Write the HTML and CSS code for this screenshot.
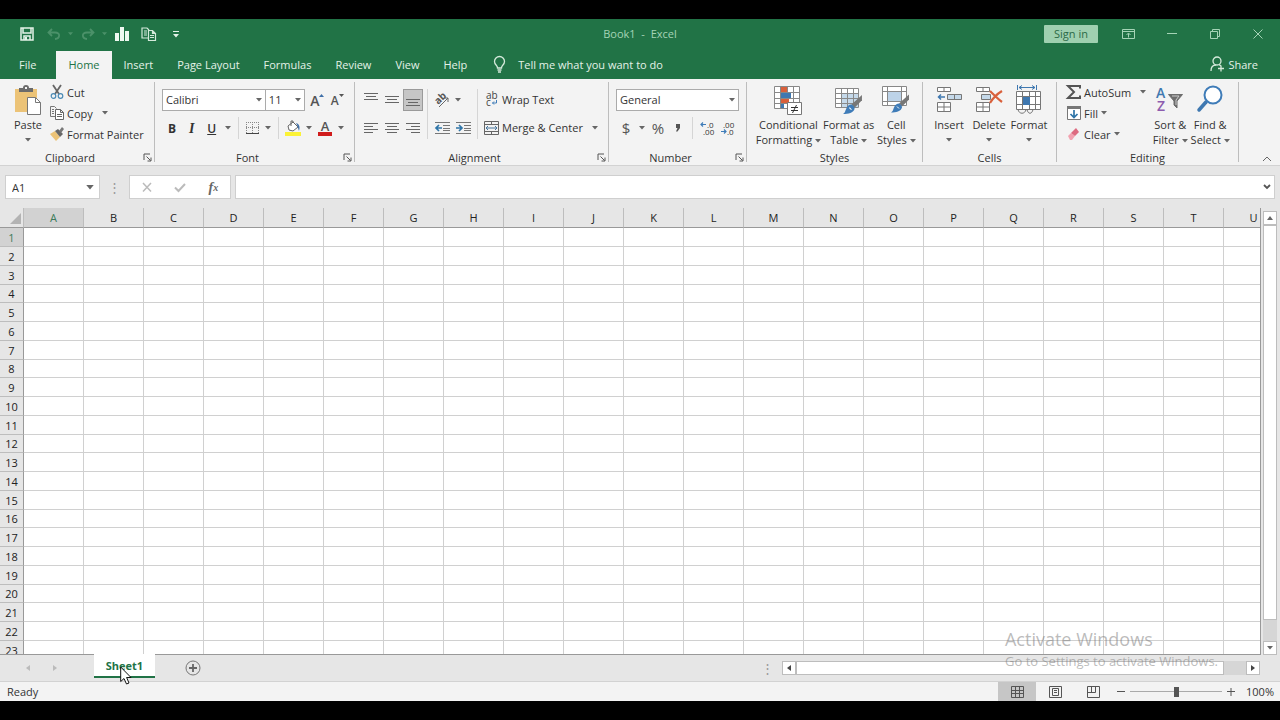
FILE: index.html
```
<!DOCTYPE html>
<html lang="en">
<head>
  <meta charset="UTF-8" />
  <meta name="viewport" content="width=device-width, initial-scale=1" />
  <title>Book1 - Excel</title>
  <link rel="stylesheet" href="styles.css">
</head>
<body>
  <svg class="defs" xmlns="http://www.w3.org/2000/svg">
    <symbol id="caret" viewBox="0 0 6 4"><path d="M0 0h6L3 3.5z" fill="currentColor"/></symbol>
    <symbol id="launcher" viewBox="0 0 9 9"><path d="M1 7V1h6M3.5 3.5l4 4M8 4.5V8H4.5" fill="none" stroke="#555"/></symbol>
    <symbol id="brush" viewBox="0 0 20 20">
      <path d="M19 1v5l-7 7-3-3z" fill="#777"/>
      <path d="M9 10c2 1 3 2 3 4-1 4-6 5-11 5 2-1 2-3 3-5 1-3 3-4 5-4z" fill="#3f7cb8"/>
      <path d="M7 13l2 2" stroke="#fff"/>
    </symbol>
  </svg>

  <header class="top">
    <div class="titlebar">
      <div class="quick">
        <button class="quick-btn" aria-label="Save"><svg width="14" height="14" viewBox="0 0 14 14"><path d="M1 1h12v12H1zM3 1v5h8V1M4 13V9h6v4" fill="none" stroke="#e4f2e8" stroke-width="1.5"/><path d="M5 10h2v3H5z" fill="#e4f2e8"/></svg></button>
        <button class="quick-btn dim" aria-label="Undo"><svg width="14" height="12" viewBox="0 0 14 12"><path d="M5 1L1.5 4.5 5 8M2 4.5h6c6 0 5 6 0 6.5" fill="none" stroke="currentColor" stroke-width="1.8"/></svg></button>
        <button class="quick-caret dim" aria-label="Undo list"><svg width="5" height="4"><use href="#caret"/></svg></button>
        <button class="quick-btn dim" aria-label="Redo"><svg width="14" height="12" viewBox="0 0 14 12"><path d="M9 1l3.5 3.5L9 8M12 4.5H6c-6 0-5 6 0 6.5" fill="none" stroke="currentColor" stroke-width="1.8"/></svg></button>
        <button class="quick-caret dim" aria-label="Redo list"><svg width="5" height="4"><use href="#caret"/></svg></button>
        <button class="quick-btn" aria-label="Chart"><svg width="14" height="14" viewBox="0 0 14 14"><path d="M0 6h4v8H0zM5 0h4v14H5zM10 4h4v10h-4z" fill="#eef8f0"/></svg></button>
        <button class="quick-btn" aria-label="Copy"><svg width="16" height="14" viewBox="0 0 16 14"><path d="M7 11H1V1h5l2 2M3 4h3M3 6h3M3 8h3" fill="none" stroke="#d5eadb" stroke-width="1.2"/><path d="M7.5 3.500h4l3 3v7h-7zM11.5 3.500v3h3M9 8.500h4M9 10.500h4" fill="none" stroke="#d5eadb" stroke-width="1.2"/></svg></button>
        <button class="quick-btn" aria-label="Customize"><svg width="6" height="7" viewBox="0 0 6 7"><path d="M0 0h6v1H0zM0 3h6L3 6.5z" fill="#e4f2e8"/></svg></button>
      </div>
      <h1 class="title">Book1&nbsp; -&nbsp; Excel</h1>
      <div class="window">
        <button class="sign-in">Sign in</button>
        <button class="window-btn" aria-label="Ribbon display"><svg width="13" height="10" viewBox="0 0 13 10"><path d="M.5 .5h12v9H.5zM.5 2.500h12M6.5 8.500v-4M4.5 6l2-2 2 2" fill="none" stroke="#a5d4b6"/></svg></button>
        <button class="window-btn" aria-label="Minimize"><svg width="10" height="2"><path d="M0 .5h10" stroke="#a5d4b6"/></svg></button>
        <button class="window-btn" aria-label="Restore"><svg width="10" height="10" viewBox="0 0 10 10"><path d="M.5 2.500h7v7h-7zM2.5 2.500v-2h7v7h-2" fill="none" stroke="#a5d4b6"/></svg></button>
        <button class="window-btn" aria-label="Close"><svg width="10" height="10" viewBox="0 0 10 10"><path d="M.5 .5l9 9M9.5 .5l-9 9" stroke="#a5d4b6"/></svg></button>
      </div>
    </div>
    <nav class="tabs">
      <button class="tab file">File</button>
      <button class="tab active">Home</button>
      <button class="tab">Insert</button>
      <button class="tab">Page Layout</button>
      <button class="tab">Formulas</button>
      <button class="tab">Review</button>
      <button class="tab">View</button>
      <button class="tab">Help</button>
      <button class="tab tell">
        <svg width="13" height="17" viewBox="0 0 13 17"><path d="M4.500 12c0-3-3-3-3-6.500a5 5 0 0110 0c0 3.500-3 3.500-3 6.500zM4.500 14h4M5 16h3" fill="none" stroke="#d5eadb" stroke-width="1.3"/></svg>
        Tell me what you want to do
      </button>
      <button class="tab share">
        <svg width="15" height="16" viewBox="0 0 15 16"><circle cx="7" cy="5" r="4" fill="none" stroke="#d5eadb" stroke-width="1.3"/><path d="M1 15c0-4 2-6 5-6M9 8.500l2 1.500M8 12.500h6M11 9.500v6" fill="none" stroke="#d5eadb" stroke-width="1.3"/></svg>
        Share
      </button>
    </nav>
  </header>

  <section class="ribbon">
    <div class="group clipboard">
      <div class="group-body">
        <button class="big">
          <svg width="28" height="30" viewBox="0 0 28 30"><path d="M1 4h22v23H1z" fill="#ecc377"/><path d="M5 3h4a3 3 0 016 0h4v4H5z" fill="#6b6b6b"/><path d="M11 2h2v2h-2z" fill="#f3f3f3"/><path d="M13.500 12.500h8l5 5v12h-13z" fill="#fff" stroke="#777"/><path d="M21.500 12.500v5h5" fill="none" stroke="#777"/></svg>
          <span>Paste</span>
          <svg class="caret" width="6" height="4"><use href="#caret"/></svg>
        </button>
        <div class="list">
          <button class="small">
            <svg width="14" height="14" viewBox="0 0 14 14"><path d="M3 0l6 9M11 0L5 9" stroke="#666" stroke-width="1.8"/><circle cx="3.500" cy="11" r="2.300" fill="none" stroke="#4a8ab5" stroke-width="1.2"/><circle cx="10.500" cy="11" r="2.300" fill="none" stroke="#4a8ab5" stroke-width="1.2"/></svg>
            Cut
          </button>
          <button class="small">
            <svg width="14" height="14" viewBox="0 0 14 14"><path d="M5 10.500H.5v-10h4l2 2M2 3.500h2M2 5.500h2M2 7.500h2" fill="none" stroke="#777"/><path d="M5.500 3.500h5l3 3v7h-8zM10.500 3.500v3h3M7 8.500h5M7 10.500h5" fill="#fff" stroke="#666"/></svg>
            Copy
            <svg class="caret far" width="6" height="4"><use href="#caret"/></svg>
          </button>
          <button class="small">
            <svg width="14" height="14" viewBox="0 0 14 14"><path d="M0 7l5-3 5 6-4 4z" fill="#ecc377"/><path d="M5 4l3-2 5 5-3 3z" fill="#666"/><path d="M9 4l3-4 2 2-3 4z" fill="#777"/></svg>
            Format Painter
          </button>
        </div>
      </div>
      <div class="group-title"><span>Clipboard</span><button class="launcher" aria-label="Clipboard options"><svg width="9" height="9"><use href="#launcher"/></svg></button></div>
    </div>

    <div class="group font">
      <div class="group-body rows">
        <div class="row">
          <select class="combo font-name" aria-label="Font"><option>Calibri</option></select>
          <select class="combo font-size" aria-label="Font size"><option>11</option></select>
          <button class="icon-btn" aria-label="Increase font size"><span class="letter">A</span><svg width="5" height="13" viewBox="0 0 5 13"><path d="M0 3h5L2.500 0z" fill="#3f6fa8"/></svg></button>
          <button class="icon-btn" aria-label="Decrease font size"><span class="letter less">A</span><svg width="5" height="13" viewBox="0 0 5 13"><path d="M0 0h5L2.500 3z" fill="#555"/></svg></button>
        </div>
        <div class="row">
          <button class="icon-btn bold">B</button>
          <button class="icon-btn italic">I</button>
          <button class="icon-btn underline">U</button>
          <button class="caret-btn" aria-label="Underline style"><svg class="caret" width="6" height="4"><use href="#caret"/></svg></button>
          <span class="divider"></span>
          <button class="icon-btn" aria-label="Borders"><svg width="13" height="12" viewBox="0 0 13 12"><path d="M.5 0v11M6.500 0v11M12.500 0v11M0 .5h13M0 5.500h13" stroke="#888" stroke-dasharray="1 1"/><path d="M0 11.500h13" stroke="#444"/></svg></button>
          <button class="caret-btn" aria-label="Border list"><svg class="caret" width="6" height="4"><use href="#caret"/></svg></button>
          <span class="divider"></span>
          <button class="icon-btn" aria-label="Fill color"><svg width="16" height="16" viewBox="0 0 16 16"><path d="M0 12h16v4H0z" fill="#fbf236"/><path d="M3 6l5-4 5 5-5 4-4-1z" fill="#fff" stroke="#666"/><path d="M6 6V1h2v2" fill="none" stroke="#666"/><path d="M11 3c4 1 4 5 3 8-1-2-1-5-3-8z" fill="#3f6fa8"/></svg></button>
          <button class="caret-btn" aria-label="Fill color list"><svg class="caret" width="6" height="4"><use href="#caret"/></svg></button>
          <button class="icon-btn" aria-label="Font color"><span class="font-color">A</span></button>
          <button class="caret-btn" aria-label="Font color list"><svg class="caret" width="6" height="4"><use href="#caret"/></svg></button>
        </div>
      </div>
      <div class="group-title"><span>Font</span><button class="launcher" aria-label="Font options"><svg width="9" height="9"><use href="#launcher"/></svg></button></div>
    </div>

    <div class="group alignment">
      <div class="group-body">
        <div class="rows">
          <div class="row spaced">
            <button class="icon-btn" aria-label="Top align"><svg width="14" height="14" viewBox="0 0 14 14"><path d="M0 .5h14M2 3.500h10M0 6.500h14" stroke="#666"/></svg></button>
            <button class="icon-btn" aria-label="Middle align"><svg width="14" height="14" viewBox="0 0 14 14"><path d="M0 3.500h14M2 6.500h10M0 9.500h14" stroke="#666"/></svg></button>
            <button class="icon-btn pressed" aria-label="Bottom align"><svg width="14" height="14" viewBox="0 0 14 14"><path d="M0 6.500h14M2 9.500h10M0 12.500h14" stroke="#666"/></svg></button>
          </div>
          <div class="row spaced">
            <button class="icon-btn" aria-label="Align left"><svg width="14" height="11" viewBox="0 0 14 11"><path d="M0 .5h14M0 3.500h9M0 6.500h14M0 9.500h9" stroke="#666"/></svg></button>
            <button class="icon-btn" aria-label="Center"><svg width="14" height="11" viewBox="0 0 14 11"><path d="M0 .5h14M2 3.500h10M0 6.500h14M2 9.500h10" stroke="#666"/></svg></button>
            <button class="icon-btn" aria-label="Align right"><svg width="14" height="11" viewBox="0 0 14 11"><path d="M0 .5h14M5 3.500h9M0 6.500h14M5 9.500h9" stroke="#666"/></svg></button>
          </div>
        </div>
        <span class="divider tall"></span>
        <div class="rows">
          <div class="row">
            <button class="icon-btn" aria-label="Orientation"><svg width="18" height="16" viewBox="0 0 18 16"><text x="2" y="11" font-size="10" font-weight="700" fill="#555" transform="rotate(-45 6 8)">ab</text><path d="M6 15L15 6M11 6h4v4" fill="none" stroke="#666"/></svg></button>
            <button class="caret-btn" aria-label="Orientation list"><svg class="caret" width="6" height="4"><use href="#caret"/></svg></button>
          </div>
          <div class="row spaced">
            <button class="icon-btn" aria-label="Decrease indent"><svg width="15" height="12" viewBox="0 0 15 12"><path d="M0 .5h15M8 3.500h7M8 6.500h7M8 8.500h7M0 11.500h15" stroke="#777"/><path d="M7 6H2M4 3L1 6l3 3" fill="none" stroke="#2f75a8" stroke-width="1.7"/></svg></button>
            <button class="icon-btn" aria-label="Increase indent"><svg width="15" height="12" viewBox="0 0 15 12"><path d="M0 .5h15M8 3.500h7M8 6.500h7M8 8.500h7M0 11.500h15" stroke="#777"/><path d="M0 6h5M3 3l3 3-3 3" fill="none" stroke="#2f75a8" stroke-width="1.7"/></svg></button>
          </div>
        </div>
        <span class="divider tall"></span>
        <div class="rows wide">
          <button class="small">
            <svg width="15" height="15" viewBox="0 0 15 15"><text y="7" font-size="10" fill="#444"><tspan x="2">ab</tspan><tspan x="2" dy="7">c</tspan></text><path d="M12.500 8v3H8.500M10 9.500L8.500 11 10 12.500" fill="none" stroke="#3f7cb8"/></svg>
            Wrap Text
          </button>
          <button class="small">
            <svg width="15" height="14" viewBox="0 0 15 14"><path d="M.5 .5h14v13H.5zM.5 3.500h14M.5 10.500h14M7.500 .5v3M7.500 10.500v3" fill="none" stroke="#666"/><path d="M2 7h11M4 5L2 7l2 2M11 5l2 2-2 2" fill="none" stroke="#47759c"/></svg>
            Merge &amp; Center
            <svg class="caret far" width="6" height="4"><use href="#caret"/></svg>
          </button>
        </div>
      </div>
      <div class="group-title"><span>Alignment</span><button class="launcher" aria-label="Alignment options"><svg width="9" height="9"><use href="#launcher"/></svg></button></div>
    </div>

    <div class="group number">
      <div class="group-body rows">
        <div class="row">
          <select class="combo format" aria-label="Number format"><option>General</option></select>
        </div>
        <div class="row">
          <button class="icon-btn sign">$</button>
          <button class="caret-btn" aria-label="Currency list"><svg class="caret" width="6" height="4"><use href="#caret"/></svg></button>
          <button class="icon-btn sign">%</button>
          <button class="icon-btn" aria-label="Comma style"><svg width="4" height="8" viewBox="0 0 4 8"><path d="M0 0h4v4L1.500 7.500H0L1.500 4H0z" fill="#555"/></svg></button>
          <span class="divider"></span>
          <button class="icon-btn" aria-label="Increase decimal"><svg width="15" height="14" viewBox="0 0 15 14"><text y="7" font-size="8" fill="#333"><tspan x="7">.0</tspan><tspan x="3" dy="7">.00</tspan></text><path d="M6 3.500H1M3 1.500l-2 2 2 2" fill="none" stroke="#3f7cb8" stroke-width="1.2"/></svg></button>
          <button class="icon-btn" aria-label="Decrease decimal"><svg width="15" height="14" viewBox="0 0 15 14"><text y="7" font-size="8" fill="#333"><tspan x="3">.00</tspan><tspan x="7" dy="7">.0</tspan></text><path d="M1 10.500h5M4 8.500l2 2-2 2" fill="none" stroke="#3f7cb8" stroke-width="1.2"/></svg></button>
        </div>
      </div>
      <div class="group-title"><span>Number</span><button class="launcher" aria-label="Number options"><svg width="9" height="9"><use href="#launcher"/></svg></button></div>
    </div>

    <div class="group styles">
      <div class="group-body">
        <button class="big">
          <svg width="28" height="30" viewBox="0 0 28 30"><path d="M.5 1.500h25v22H.5z" fill="#fff"/><path d="M7 2h6v5H7zM7 14h8v4H7z" fill="#d9603b"/><path d="M7 8h10v5H7zM7 19h3v4H7z" fill="#3f78b0"/><path d="M.5 1.500h25v22H.5zM.5 7.500h25M.5 13.500h25M.5 18.500h25M6.500 1.500v22M13.500 1.500v6M19.500 1.500v22" fill="none" stroke="#888"/><path d="M13.500 17.500h14v12h-14z" fill="#fff" stroke="#777"/><path d="M17 22.500h7M17 25.500h7M22.500 20l-4 8" stroke="#333"/></svg>
          <span>Conditional<br>Formatting <svg class="caret" width="6" height="4"><use href="#caret"/></svg></span>
        </button>
        <button class="big">
          <svg width="28" height="30" viewBox="0 0 28 30"><path d="M.5 3.500h23v19H.5z" fill="#fff"/><path d="M6 8h18v14H6z" fill="#c5d9ea"/><path d="M.5 3.500h23v19H.5zM.5 8.500h23M.5 13.500h23M.5 18.500h23M6.500 3.500v19M12.500 3.500v19M18.500 3.500v19" fill="none" stroke="#888"/><use href="#brush" x="7" y="9" width="21" height="21"/></svg>
          <span>Format as<br>Table <svg class="caret" width="6" height="4"><use href="#caret"/></svg></span>
        </button>
        <button class="big">
          <svg width="28" height="30" viewBox="0 0 28 30"><path d="M.5 1.500h24v19H.5z" fill="#fff"/><path d="M5 7h15v10H5z" fill="#bdd3e8"/><path d="M.5 1.500h24v19H.5zM.5 6.500h24M.5 16.500h24M5.500 1.500v19M19.500 1.500v19" fill="none" stroke="#888"/><use href="#brush" x="8" y="8" width="20" height="21"/></svg>
          <span>Cell<br>Styles <svg class="caret" width="6" height="4"><use href="#caret"/></svg></span>
        </button>
      </div>
      <div class="group-title"><span>Styles</span></div>
    </div>

    <div class="group cells">
      <div class="group-body">
        <button class="big">
          <svg width="26" height="30" viewBox="0 0 26 30"><path d="M1.500 2.500h13v4h-13zM8 2.500v4M1.500 17.500h13v9h-13zM8 17.500v9M1.500 22h13" fill="#fff" stroke="#777"/><path d="M11.500 9.500h14v5h-14zM18.500 9.500v5" fill="#c5d9ea" stroke="#777"/><path d="M9 12H3M5 9.500L2.500 12 5 14.500" fill="none" stroke="#3f78b0" stroke-width="1.5"/></svg>
          <span>Insert</span>
          <svg class="caret" width="6" height="4"><use href="#caret"/></svg>
        </button>
        <button class="big">
          <svg width="28" height="30" viewBox="0 0 28 30"><path d="M1.500 2.500h13v4h-13zM8 2.500v4M1.500 17.500h13v9h-13zM8 17.500v9M1.500 22h13" fill="#fff" stroke="#777"/><path d="M6.500 9.500h9v5h-9z" fill="#c5d9ea" stroke="#777"/><path d="M15 6c4 4 8 8 12 11M27 6c-5 3-9 7-12 12" fill="none" stroke="#d9603b" stroke-width="2.2"/></svg>
          <span>Delete</span>
          <svg class="caret" width="6" height="4"><use href="#caret"/></svg>
        </button>
        <button class="big">
          <svg width="28" height="30" viewBox="0 0 28 30"><path d="M1.500 6.500h24v18h-24z" fill="#fff"/><path d="M1.500 6.500h24v18h-24zM1.500 11.500h24M1.500 19.500h24M7.500 6.500v18M14.500 6.500v18M20.500 6.500v18M3 24.500c1 5 7 5 8 0M12 24.500c1 5 5 5 6 0" fill="none" stroke="#777"/><path d="M8 12h7v8H8z" fill="#3f78b0"/><path d="M2.500 0v5M21.500 0v5M4 2.500h16M7 .5l-3 2 3 2M17 .5l3 2-3 2" fill="none" stroke="#3f78b0"/></svg>
          <span>Format</span>
          <svg class="caret" width="6" height="4"><use href="#caret"/></svg>
        </button>
      </div>
      <div class="group-title"><span>Cells</span></div>
    </div>

    <div class="group editing">
      <div class="group-body">
        <div class="list">
          <button class="small">
            <svg width="14" height="14" viewBox="0 0 14 14"><path d="M13 3.500V1H1l6 6-6 6h12v-2.500" fill="none" stroke="#555" stroke-width="2"/></svg>
            AutoSum
            <svg class="caret far" width="6" height="4"><use href="#caret"/></svg>
          </button>
          <button class="small">
            <svg width="14" height="14" viewBox="0 0 14 14"><path d="M.5 .5h13v13H.5z" fill="#fff" stroke="#777"/><path d="M0 1.500h14" stroke="#777" stroke-width="3"/><path d="M7 4v7M3.500 8L7 11.500 10.500 8" fill="none" stroke="#2f75a8" stroke-width="1.7"/></svg>
            Fill
            <svg class="caret" width="6" height="4"><use href="#caret"/></svg>
          </button>
          <button class="small">
            <svg width="14" height="14" viewBox="0 0 14 14"><path d="M1 9l3-3 4 3-3 4H3z" fill="#f2a2b0"/><path d="M4 6l5-5 3 4-4 4z" fill="#dd6b80"/></svg>
            Clear
            <svg class="caret" width="6" height="4"><use href="#caret"/></svg>
          </button>
        </div>
        <button class="big">
          <svg width="28" height="30" viewBox="0 0 28 30"><text y="13" font-size="14" font-weight="600"><tspan x="0" fill="#3f78b0">A</tspan><tspan x="1" dy="13" fill="#8d5cae">Z</tspan></text><path d="M12.500 9.500h14L21 16v7l-3-3v-4z" fill="#6d6d6d" stroke="#6d6d6d"/><path d="M16 11h7l-3 4v5" fill="none" stroke="#ccc"/></svg>
          <span>Sort &amp;<br>Filter <svg class="caret" width="6" height="4"><use href="#caret"/></svg></span>
        </button>
        <button class="big">
          <svg width="28" height="30" viewBox="0 0 28 30"><path d="M10 17l-7 8" stroke="#3f78b0" stroke-width="3.500" stroke-linecap="round"/><circle cx="17" cy="10" r="8.500" fill="#fff" stroke="#3f7cb8" stroke-width="2"/></svg>
          <span>Find &amp;<br>Select <svg class="caret" width="6" height="4"><use href="#caret"/></svg></span>
        </button>
      </div>
      <div class="group-title"><span>Editing</span></div>
    </div>
    <button class="collapse" aria-label="Collapse ribbon"><svg width="10" height="6" viewBox="0 0 10 6"><path d="M1 5l4-4 4 4" fill="none" stroke="#666"/></svg></button>
  </section>

  <div class="formula-bar">
    <div class="field name-box">
      <input type="text" value="A1" aria-label="Name box">
      <button aria-label="Name list"><svg width="8" height="5"><use href="#caret"/></svg></button>
    </div>
    <span class="grip">⋮</span>
    <div class="field functions">
      <button aria-label="Cancel"><svg width="10" height="9" viewBox="0 0 10 9"><path d="M1 0l8 8.500M9 0L1 8.500" stroke="#bbb" stroke-width="1.5"/></svg></button>
      <button aria-label="Enter"><svg width="12" height="9" viewBox="0 0 12 9"><path d="M1 4.500L4.500 8 11 1" fill="none" stroke="#bbb" stroke-width="2"/></svg></button>
      <button class="fx" aria-label="Insert function">f<small>x</small></button>
    </div>
    <div class="field formula">
      <input type="text" aria-label="Formula">
      <button aria-label="Expand formula bar"><svg width="8" height="6" viewBox="0 0 8 6"><path d="M1 1l3 3 3-3" fill="none" stroke="#555" stroke-width="1.8"/></svg></button>
    </div>
  </div>

  <main class="sheet">
    <div class="grid">
      <table>
        <thead><tr id="columns"><th class="corner"><svg width="11" height="11"><path d="M11 0v11H0z" fill="#b3b3b3"/></svg></th></tr></thead>
        <tbody id="cells"></tbody>
      </table>
    </div>
    <div class="scroll vertical">
      <button aria-label="Scroll up"><svg width="6" height="4"><path d="M0 4h6L3 0z" fill="#666"/></svg></button>
      <div class="track"><div class="thumb"></div></div>
      <button aria-label="Scroll down"><svg class="caret" width="6" height="4"><use href="#caret"/></svg></button>
    </div>
  </main>

  <div class="sheet-bar">
    <button class="nav-btn" aria-label="Previous sheet"><svg width="4" height="6"><path d="M4 0v6L0 3z" fill="#bbb"/></svg></button>
    <button class="nav-btn" aria-label="Next sheet"><svg width="4" height="6"><path d="M0 0v6l4-3z" fill="#bbb"/></svg></button>
    <button class="sheet-tab">Sheet1
      <svg class="pointer" width="12" height="19" viewBox="0 0 12 19"><path d="M.7 1v14.500l3.300-3 2.500 5.500 2.500-1-2.400-5.500H11z" fill="#fff" stroke="#111"/></svg>
    </button>
    <button class="add-sheet" aria-label="New sheet"><svg width="16" height="16" viewBox="0 0 16 16"><circle cx="8" cy="8" r="7" fill="none" stroke="#777"/><path d="M8 4v8M4 8h8" stroke="#666" stroke-width="1.8"/></svg></button>
    <span class="grip">⋮</span>
    <div class="scroll horizontal">
      <button aria-label="Scroll left"><svg width="4" height="6"><path d="M4 0v6L0 3z" fill="#444"/></svg></button>
      <div class="track"><div class="thumb"></div></div>
      <button aria-label="Scroll right"><svg width="4" height="6"><path d="M0 0v6l4-3z" fill="#444"/></svg></button>
    </div>
  </div>

  <footer class="status">
    <span class="ready">Ready</span>
    <button class="view active" aria-label="Normal view"><svg width="13" height="12" viewBox="0 0 13 12"><path d="M.5 .5h12v11H.5zM4.500 .5v11M8.500 .5v11M.5 4.500h12M.5 7.500h12" fill="none" stroke="#555"/></svg></button>
    <button class="view" aria-label="Page layout view"><svg width="13" height="12" viewBox="0 0 13 12"><path d="M.5 .5h12v11H.5zM3.500 2.500h6v7h-6zM5 4.500h3M5 6.500h3" fill="none" stroke="#555"/></svg></button>
    <button class="view" aria-label="Page break view"><svg width="13" height="12" viewBox="0 0 13 12"><path d="M.5 .5h12v11H.5zM4.500 .5v6M8.500 .5v6M.5 6.500h8" fill="none" stroke="#555"/></svg></button>
    <button class="zoom-btn" aria-label="Zoom out"><svg width="8" height="8"><path d="M0 3.500h8" stroke="#555"/></svg></button>
    <input class="zoom" type="range" min="0" max="200" value="100" aria-label="Zoom">
    <button class="zoom-btn" aria-label="Zoom in"><svg width="8" height="8"><path d="M0 3.500h8M4 0v8" stroke="#555"/></svg></button>
    <span class="percent">100%</span>
  </footer>

  <aside class="watermark">
    <p class="watermark-title">Activate Windows</p>
    <p>Go to Settings to activate Windows.</p>
  </aside>

  <script>
    const columns = document.getElementById("columns");
    const cells = document.getElementById("cells");
    const letters = "ABCDEFGHIJKLMNOPQRSTU".split("");

    letters.forEach((letter, i) => {
      const th = document.createElement("th");
      th.textContent = letter;
      if (i === 0) th.className = "selected";
      columns.appendChild(th);
    });

    for (let row = 1; row <= 23; row++) {
      const tr = document.createElement("tr");
      tr.innerHTML = `<th${row === 1 ? " class='selected'" : ""}>${row}</th>` + "<td></td>".repeat(letters.length);
      cells.appendChild(tr);
    }
  </script>
</body>
</html>
```
FILE: styles.css
```
* {
  box-sizing: border-box;
}

body {
  margin: 0;
  padding: 19px 0;
  height: 100vh;
  display: flex;
  flex-direction: column;
  overflow: hidden;
  background-color: #000;
  color: #333;
  font-family: "Open Sans", "Noto Sans", sans-serif;
  font-size: 11px;
  line-height: 15px;
}

.defs {
  display: none;
}

button,
input,
select {
  margin: 0;
  padding: 0;
  border: none;
  background: none;
  color: inherit;
  font: inherit;
}

button {
  display: flex;
  align-items: center;
  justify-content: center;
  white-space: nowrap;
}

svg {
  flex: none;
  overflow: visible;
}

.caret {
  color: #666;
}

/* title bar and tabs */
.top {
  background-color: #217346;
  color: #e4f2e8;
}

.titlebar {
  display: grid;
  grid-template-columns: 1fr auto 1fr;
  align-items: center;
  height: 30px;
}

.quick {
  display: flex;
  padding-left: 13px;
}

.quick-btn {
  width: 27px;
  height: 24px;
}

.quick-caret {
  width: 7px;
}

.dim {
  color: #4b9169;
}

.title {
  margin: 0;
  padding-bottom: 2px;
  font-size: 11px;
  font-weight: 400;
  color: #a5d4b6;
}

.window {
  display: flex;
  align-items: center;
  justify-content: flex-end;
  padding: 0 1px 1px 0;
}

.sign-in {
  width: 54px;
  height: 18px;
  margin-right: 9px;
  border-radius: 1px;
  background-color: #9fd0b0;
  color: #2b6a47;
}

.window-btn {
  width: 43px;
  height: 24px;
}

.tabs {
  display: flex;
  height: 30px;
  padding-top: 2px;
}

.tab {
  padding: 0 12px 2px;
}

.file {
  padding: 0 20px 2px 19px;
}

.tab.active {
  background-color: #f3f3f3;
  color: #217346;
}

.tell {
  gap: 12px;
  padding-left: 14px;
}

.share {
  gap: 3px;
  margin-left: auto;
  padding-right: 22px;
}

/* ribbon */
.ribbon {
  display: flex;
  height: 87px;
  padding: 3px 0;
  background-color: #f3f3f3;
  border-bottom: 1px solid #d2d2d2;
}

.group {
  display: flex;
  flex-direction: column;
  flex: none;
  border-right: 1px solid #bdbdbd;
}

.clipboard { width: 155px; }
.font { width: 200px; }
.alignment { width: 254px; }
.number { width: 138px; }
.styles { width: 176px; }
.cells { width: 134px; }
.editing { width: 182px; }

.group-body {
  display: flex;
  flex: 1;
  padding: 0 6px;
}

.group-title {
  display: flex;
  height: 12px;
  text-align: center;
}

.group-title span {
  flex: 1;
}

.launcher {
  width: 14px;
  height: 15px;
}

.rows {
  display: flex;
  flex-direction: column;
  gap: 6px;
  padding-top: 7px;
}

.wide {
  padding-left: 2px;
}

.font .group-body,
.number .group-body {
  padding: 7px 7px 0;
}

.row {
  display: flex;
  height: 22px;
}

.spaced {
  gap: 1px;
}

.icon-btn {
  width: 20px;
  height: 22px;
}

.caret-btn {
  width: 12px;
}

.pressed {
  background-color: #c6c6c6;
  border: 1px solid #9a9a9a;
}

.divider {
  width: 1px;
  margin: 0 4px;
  background-color: #d5d5d5;
}

.tall {
  height: 50px;
  margin: 7px 4px 0;
}

.combo {
  appearance: none;
  height: 22px;
  padding: 0 3px 1px;
  border: 1px solid #ababab;
  background: #fff url("data:image/svg+xml,%3Csvg xmlns='http://www.w3.org/2000/svg' width='6' height='4'%3E%3Cpath d='M0 0h6L3 3.5z' fill='%23666'/%3E%3C/svg%3E") no-repeat right 3px center;
}

.font-name {
  width: 105px;
}

.font-size {
  width: 41px;
  margin: 0 2px 0 -1px;
}

.format {
  width: 124px;
}

.letter {
  font-size: 14px;
  font-weight: 600;
  color: #555;
}

.less {
  font-size: 12px;
}

.bold,
.underline {
  font-size: 12px;
  font-weight: 700;
}

.italic {
  font-family: "Liberation Serif", serif;
  font-size: 14px;
  font-style: italic;
  font-weight: 700;
}

.underline {
  font-weight: 600;
  text-decoration: underline;
}

.font-color {
  width: 14px;
  height: 16px;
  border-bottom: 4px solid #d01c1c;
  font-size: 13px;
  line-height: 12px;
  font-weight: 600;
  color: #555;
}

.sign {
  font-size: 15px;
  color: #555;
}

.big {
  flex-direction: column;
  justify-content: flex-start;
  min-width: 40px;
  padding-top: 3px;
  gap: 2px;
}

.big > .caret {
  margin-top: 4px;
}

.big span .caret {
  vertical-align: middle;
}

.clipboard .group-body {
  padding-left: 8px;
  gap: 2px;
}

.styles .group-body {
  padding: 0 5px 0 8px;
  justify-content: center;
  gap: 2px;
}

.editing .group-body {
  padding-left: 10px;
}

.editing .list {
  padding-right: 4px;
}

.list {
  display: flex;
  flex-direction: column;
}

.small {
  height: 22px;
  padding-bottom: 1px;
  gap: 3px;
  justify-content: flex-start;
}

.list .small {
  height: 21px;
}

.clipboard .far,
.alignment .far,
.editing .far {
  margin-left: 6px;
}

.collapse {
  margin: auto 7px 0 auto;
  width: 12px;
  height: 6px;
}

/* formula bar */
.formula-bar {
  display: flex;
  height: 42px;
  padding: 9px 5px;
  background-color: #e6e6e6;
}

.field {
  display: flex;
  border: 1px solid #cfcfcf;
  background-color: #fff;
}

.field input {
  flex: 1;
  min-width: 0;
  padding-left: 6px;
  outline: none;
}

.field button {
  width: 18px;
  color: #666;
}

.formula button {
  width: 14px;
}

.name-box {
  width: 95px;
}

.grip {
  width: 29px;
  font-size: 13px;
  line-height: 24px;
  text-align: center;
  color: #999;
}

.functions {
  width: 102px;
  margin-right: 4px;
}

.functions button {
  flex: 1;
}

.functions .fx {
  font-family: "Liberation Serif", serif;
  font-size: 14px;
  font-style: italic;
  font-weight: 700;
}

.fx small {
  font-size: 10px;
}

.formula {
  flex: 1;
}

/* sheet */
.sheet {
  display: flex;
  flex: 1;
  min-height: 0;
  background-color: #e6e6e6;
}

.grid {
  flex: 1;
  min-width: 0;
  overflow: hidden;
  border-right: 1px solid #999;
  border-bottom: 1px solid #999;
}

table {
  width: 1284px;
  table-layout: fixed;
  border-collapse: separate;
  border-spacing: 0;
  background-color: #fff;
}

th,
td {
  height: 19px;
  padding: 0;
  border: solid #d0d0d0;
  border-width: 0 1px 1px 0;
}

tbody tr:nth-child(4n) > * {
  height: 18px;
}

th {
  background-color: #e6e6e6;
  border-color: #bdbdbd;
  font-weight: 400;
  line-height: 17px;
  color: #222;
}

thead th {
  height: 20px;
  border-bottom-color: #999;
}

tbody th {
  border-right-color: #999;
}

.corner {
  width: 24px;
  line-height: 0;
  text-align: right;
  vertical-align: bottom;
  padding: 0 2px 3px 0;
}

.selected {
  background-color: #d2d2d2;
  color: #3c7a59;
}

.scroll {
  display: flex;
}

.scroll button {
  width: 14px;
  height: 14px;
  border: 1px solid #bdbdbd;
  background-color: #fff;
}

.track {
  flex: 1;
  background-color: #d6d6d6;
}

.thumb {
  background-color: #fff;
  border: 1px solid #bdbdbd;
}

.vertical {
  flex-direction: column;
  width: 19px;
  padding: 3px 3px 0 2px;
}

.vertical .thumb {
  height: 95%;
}

.horizontal {
  width: 478px;
  height: 14px;
}

.horizontal .thumb {
  width: 95%;
  height: 14px;
}

.sheet-bar {
  display: flex;
  align-items: center;
  height: 26px;
  padding: 0 20px 1px 14px;
  background-color: #e6e6e6;
}

.nav-btn {
  width: 27px;
}

.sheet-tab {
  position: relative;
  align-self: flex-start;
  width: 61px;
  height: 24px;
  margin: -1px 30px 0 26px;
  border: solid #217346;
  border-width: 0 0 2px;
  background-color: #fff;
  font-weight: 700;
  color: #217346;
}

.pointer {
  position: absolute;
  left: 26px;
  top: 12px;
}

.sheet-bar .grip {
  margin-left: auto;
}

/* status bar */
.status {
  display: flex;
  align-items: center;
  height: 20px;
  padding: 0 6px 0 7px;
  border-top: 1px solid #d2d2d2;
  background-color: #f3f3f3;
}

.ready {
  flex: 1;
}

.view {
  width: 38px;
  height: 19px;
}

.view.active {
  background-color: #c6c6c6;
}

.zoom-btn {
  width: 18px;
}

.zoom {
  appearance: none;
  width: 92px;
  height: 12px;
  background: linear-gradient(#aaa, #aaa) no-repeat center / 100% 1px;
}

.zoom::-webkit-slider-thumb {
  appearance: none;
  width: 5px;
  height: 10px;
  background-color: #555;
}

.percent {
  width: 34px;
  text-align: right;
}

.watermark {
  position: absolute;
  right: 62px;
  bottom: 49px;
  color: rgba(120, 120, 120, 0.5);
  font-size: 13px;
  pointer-events: none;
}

.watermark p {
  margin: 0;
  line-height: 20px;
}

.watermark .watermark-title {
  font-size: 18px;
  line-height: 24px;
}
```
